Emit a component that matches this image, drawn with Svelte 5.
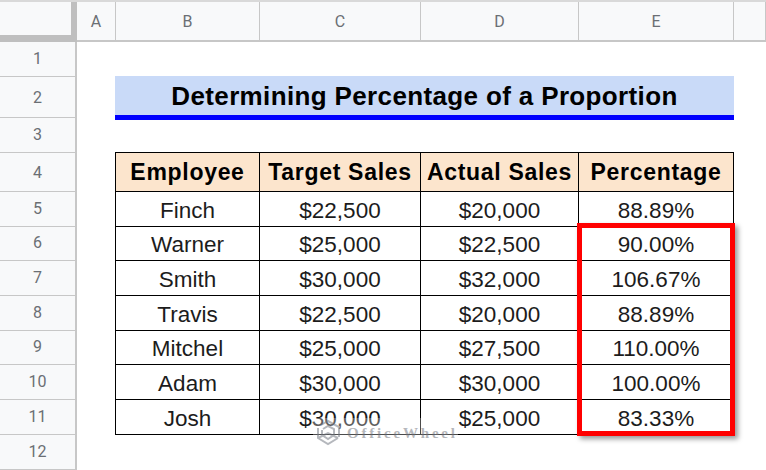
<script>
  const columns = ['A', 'B', 'C', 'D', 'E', ''];
  const heights = [35, 41, 35, 39, 35, 34, 35, 35, 34, 35, 35, 35];
  const head = ['Employee', 'Target Sales', 'Actual Sales', 'Percentage'];
  const rows = [
    ['Finch', '$22,500', '$20,000', '88.89%'],
    ['Warner', '$25,000', '$22,500', '90.00%'],
    ['Smith', '$30,000', '$32,000', '106.67%'],
    ['Travis', '$22,500', '$20,000', '88.89%'],
    ['Mitchel', '$25,000', '$27,500', '110.00%'],
    ['Adam', '$30,000', '$30,000', '100.00%'],
    ['Josh', '$30,000', '$25,000', '83.33%']
  ];
  const gridRows = '40px ' + heights.map((h) => h + 'px').join(' ');
</script>

<div class="sheet" style="grid-template-rows: {gridRows}">
  <div class="corner"></div>
  {#each columns as col}
    <div class="col-head">{col}</div>
  {/each}

  {#each heights as h, i}
    <div class="row-head" class:tall={h > 35} style="grid-row: {i + 2}">{i + 1}</div>
  {/each}

  <div class="title" style="grid-row: 3">Determining Percentage of a Proportion</div>

  {#each head as text, c}
    <div class="cell th" style="grid-row: 5; grid-column: {c + 3}">{text}</div>
  {/each}

  {#each rows as row, r}
    {#each row as text, c}
      <div class="cell" style="grid-row: {r + 6}; grid-column: {c + 3}">{text}</div>
    {/each}
  {/each}

  <div class="highlight"></div>

  <div class="watermark">
    <svg width="30" height="30" viewBox="0 0 30 30" fill="none" stroke="#8f939b" stroke-width="2">
      <path d="M8 7 L15 3 L26 9 V19" />
      <path d="M5 10 V20 L15 26 L25 20" />
      <path d="M10 11 L15 8 L21 11 V17 L15 21 L9 17 V12" />
      <path d="M5 20 L15 15 L25 20" />
    </svg>
    <span>OfficeWheel</span>
  </div>
</div>

<style>
  :global(body) {
    margin: 0;
    background: #fff;
  }
  .sheet {
    position: relative;
    display: grid;
    grid-template-columns: 77px 39px 144px 161px 158px 155px 32px;
    width: 766px;
    height: 470px;
    box-sizing: border-box;
    padding-top: 2px;
    overflow: hidden;
    background: #fff;
    font-family: "Liberation Sans", Arial, sans-serif;
    color: #000;
  }
  .sheet::before {
    content: '';
    position: absolute;
    top: 0;
    left: 0;
    right: 0;
    height: 2px;
    background: #d9d9d9;
  }
  .corner {
    grid-row: 1;
    grid-column: 1;
    background: #f8f9fa;
    border-right: 6px solid #bfbfbf;
    border-bottom: 7px solid #bfbfbf;
    box-sizing: border-box;
  }
  .col-head {
    grid-row: 1;
    background: #f8f9fa;
    border-right: 1px solid #c7c7c7;
    border-bottom: 2px solid #c7c7c7;
    box-sizing: border-box;
    display: flex;
    align-items: center;
    justify-content: center;
    font-family: Roboto, "Liberation Sans", sans-serif;
    font-size: 16px;
    color: #6b6f74;
  }
  .row-head {
    grid-column: 1;
    background: #f8f9fa;
    border-right: 2px solid #c7c7c7;
    border-bottom: 1px solid #c7c7c7;
    box-sizing: border-box;
    display: flex;
    align-items: center;
    justify-content: center;
    padding-bottom: 2px;
    font-family: Roboto, "Liberation Sans", sans-serif;
    font-size: 16px;
    color: #6b6f74;
  }
  .row-head.tall {
    padding-bottom: 0;
  }
  .title {
    grid-column: 3 / 7;
    display: flex;
    align-items: center;
    justify-content: center;
    box-sizing: border-box;
    background: #c9daf8;
    border-bottom: 5px solid #0000ff;
    margin: -1px 0 -2px -1px;
    padding-top: 2px;
    font-size: 26px;
    font-weight: 700;
    letter-spacing: 0.36px;
  }
  .cell {
    display: flex;
    align-items: center;
    justify-content: center;
    box-sizing: border-box;
    margin-left: -1px;
    margin-top: -1px;
    padding-top: 3px;
    border: 1px solid #000;
    font-size: 22.5px;
    color: #1c1c1c;
    white-space: nowrap;
  }
  .th {
    background: #fce5cd;
    padding-top: 1px;
    font-size: 23px;
    font-weight: 700;
    letter-spacing: 0.7px;
    color: #000;
  }
  .highlight {
    position: absolute;
    left: 577px;
    top: 223px;
    width: 148px;
    height: 203px;
    border: 5px solid #ff0000;
    box-shadow: 3px 3px 5px rgba(0, 0, 0, 0.4);
  }
  .watermark {
    position: absolute;
    left: 313px;
    top: 418px;
    display: flex;
    align-items: center;
    gap: 4px;
    opacity: 0.65;
    background: rgba(255, 255, 255, 0.45);
  }
  .watermark span {
    font-family: "Liberation Serif", serif;
    font-size: 15px;
    font-weight: 700;
    letter-spacing: 2.8px;
    color: #8e9197;
  }
</style>
